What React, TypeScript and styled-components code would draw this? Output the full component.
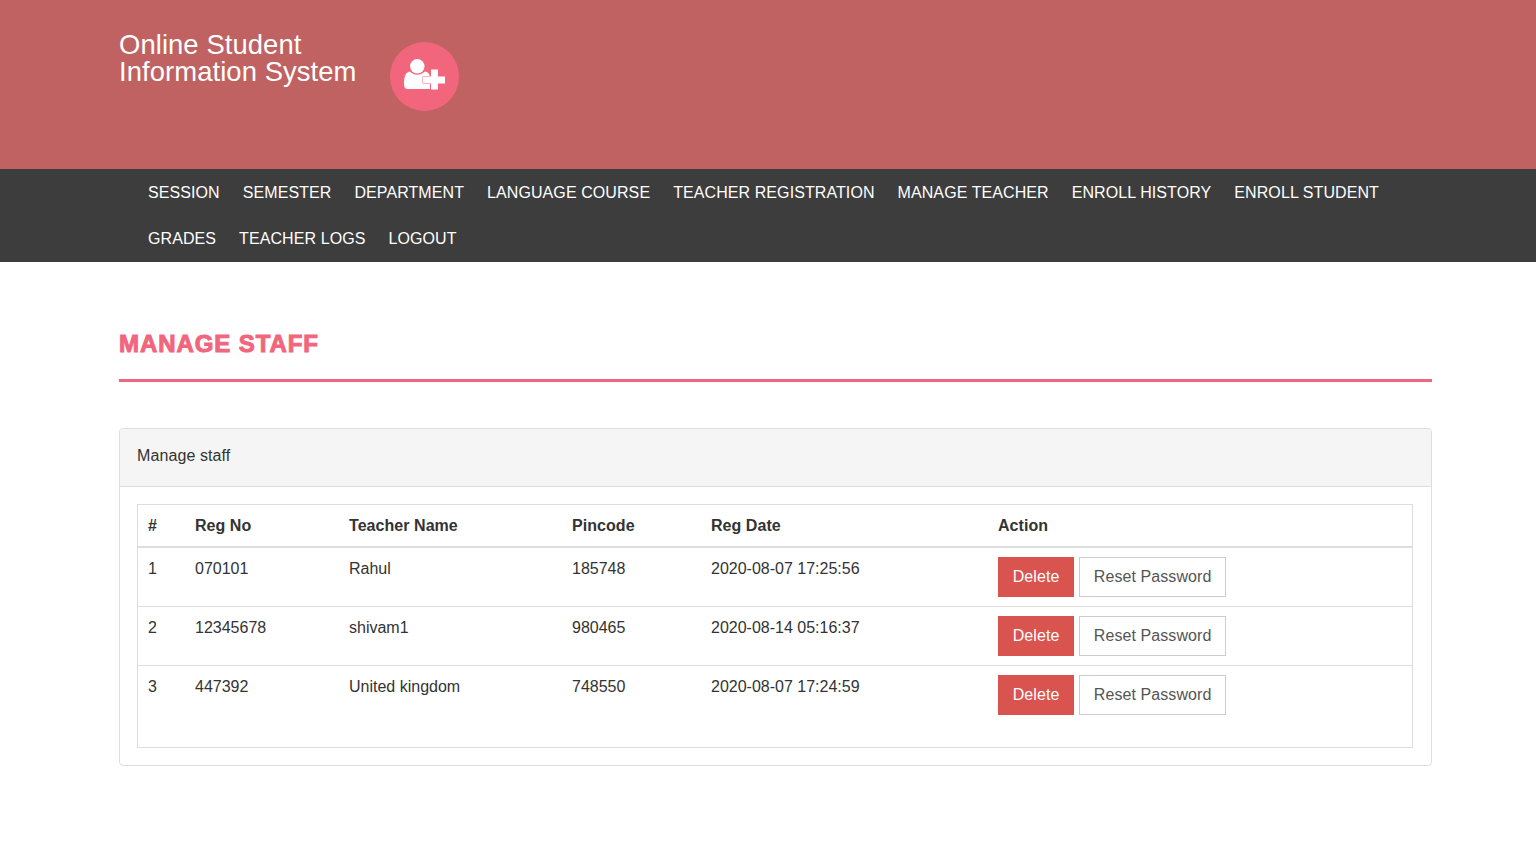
import React from "react";
import styled, { createGlobalStyle } from "styled-components";

const Global = createGlobalStyle`
  html, body {
    margin: 0;
    padding: 0;
    background: #fff;
  }
  * { box-sizing: border-box; }
  body {
    font-family: "Liberation Sans", Arial, sans-serif;
    font-size: 16px;
    line-height: 23px;
    color: #333;
  }
`;

const Header = styled.header`
  height: 169px;
  background: #c06262;
  padding: 30.5px 104px 0 119px;
  display: flex;
  align-items: flex-start;
`;

const Brand = styled.div`
  color: #fff;
  font-size: 27.43px;
  line-height: 27.5px;
  letter-spacing: 0.07px;
  width: 271px;
`;

const Badge = styled.div`
  width: 69px;
  height: 69px;
  margin-top: 11px;
  padding-bottom: 4px;
  border-radius: 50%;
  background: #f1667c;
  display: flex;
  align-items: center;
  justify-content: center;
`;

const Nav = styled.nav`
  height: 93px;
  background: #3d3d3d;
  padding: 0 104px 0 136.5px;
  display: flex;
  flex-wrap: wrap;
  align-content: flex-start;
`;

const NavLink = styled.a`
  display: block;
  color: #fff;
  height: 46px;
  line-height: 48px;
  padding: 0 11.5px;
  text-decoration: none;
  letter-spacing: 0.085px;
`;

const Main = styled.main`
  padding: 0 104px 0 119px;
`;

const Title = styled.h1`
  margin: 0;
  padding: 67px 0 20px;
  height: 120px;
  border-bottom: 3px solid #f1667c;
  color: #f1667c;
  font-family: "Liberation Sans", Arial, sans-serif;
  font-size: 24px;
  line-height: 30px;
  font-weight: 700;
  -webkit-text-stroke: 1px #f1667c;
  letter-spacing: 0.92px;
`;

const Panel = styled.section`
  margin-top: 46px;
  border: 1px solid #ddd;
  border-radius: 4px;
  overflow: hidden;
`;

const PanelHeading = styled.div`
  height: 58px;
  padding: 15px 17px;
  background: #f5f5f5;
  border-bottom: 1px solid #ddd;
  letter-spacing: 0.1px;
`;

const PanelBody = styled.div`
  padding: 17px 18px 17px 17px;
`;

const TableFrame = styled.div`
  border: 1px solid #ddd;
  padding-bottom: 22px;
`;

const Table = styled.table`
  width: 100%;
  border-collapse: collapse;
  table-layout: fixed;
`;

const Th = styled.th<{ $width?: number }>`
  text-align: left;
  padding: 9px 10px;
  font-weight: 700;
  border-bottom: 2px solid #ddd;
  width: ${(p) => (p.$width ? `${p.$width}px` : "auto")};
  letter-spacing: 0.05px;
`;

const Td = styled.td`
  padding: 9px 10px;
  vertical-align: top;
`;

const Row = styled.tr`
  height: 59px;
  & + & > td {
    border-top: 1px solid #ddd;
  }
`;

const Button = styled.button<{ $danger?: boolean }>`
  height: 40px;
  padding: 0 13.7px 2px;
  font: inherit;
  letter-spacing: 0.08px;
  border: 1px solid ${(p) => (p.$danger ? "#d9534f" : "#ccc")};
  background: ${(p) => (p.$danger ? "#d9534f" : "#fff")};
  color: ${(p) => (p.$danger ? "#fff" : "#555")};
  margin-right: 5px;
  vertical-align: top;
`;

const UserPlusIcon = () => (
  <svg width="41" height="31" viewBox="0 0 41 31" fill="#fff">
    <circle cx="13.3" cy="7.3" r="7.2" />
    <path d="M0 25.5C0 18 1.5 13.2 5.8 12.6C7.6 14.6 10.3 15.8 13.3 15.8C16.3 15.8 19 14.6 20.8 12.6C24 13 25.6 15 26 18V30H3.5C1.4 30 0 28.3 0 25.5Z" />
    <path
      d="M27 10.5H34V17.5H41V24.5H34V30.5H27V24.5H19V17.5H27Z"
      stroke="#f1667c"
      strokeWidth="1"
      paintOrder="stroke"
    />
  </svg>
);

const links = [
  "SESSION",
  "SEMESTER",
  "DEPARTMENT",
  "LANGUAGE COURSE",
  "TEACHER REGISTRATION",
  "MANAGE TEACHER",
  "ENROLL HISTORY",
  "ENROLL STUDENT",
  "GRADES",
  "TEACHER LOGS",
  "LOGOUT",
];

const staff = [
  { id: 1, reg: "070101", name: "Rahul", pin: "185748", date: "2020-08-07 17:25:56" },
  { id: 2, reg: "12345678", name: "shivam1", pin: "980465", date: "2020-08-14 05:16:37" },
  { id: 3, reg: "447392", name: "United kingdom", pin: "748550", date: "2020-08-07 17:24:59" },
];

const App = () => {
  return (
    <>
      <Global />
      <Header>
        <Brand>
          Online Student
          <br />
          Information System
        </Brand>
        <Badge>
          <UserPlusIcon />
        </Badge>
      </Header>
      <Nav>
        {links.map((l) => (
          <NavLink key={l} href="#">
            {l}
          </NavLink>
        ))}
      </Nav>
      <Main>
        <Title>MANAGE STAFF</Title>
        <Panel>
          <PanelHeading>Manage staff</PanelHeading>
          <PanelBody>
            <TableFrame>
              <Table>
                <thead>
                  <tr>
                    <Th $width={47}>#</Th>
                    <Th $width={154}>Reg No</Th>
                    <Th $width={223}>Teacher Name</Th>
                    <Th $width={139}>Pincode</Th>
                    <Th $width={287}>Reg Date</Th>
                    <Th>Action</Th>
                  </tr>
                </thead>
                <tbody>
                  {staff.map((s) => (
                    <Row key={s.id}>
                      <Td>{s.id}</Td>
                      <Td>{s.reg}</Td>
                      <Td>{s.name}</Td>
                      <Td>{s.pin}</Td>
                      <Td>{s.date}</Td>
                      <Td>
                        <Button $danger>Delete</Button>
                        <Button>Reset Password</Button>
                      </Td>
                    </Row>
                  ))}
                </tbody>
              </Table>
            </TableFrame>
          </PanelBody>
        </Panel>
      </Main>
    </>
  );
};

export default App;
